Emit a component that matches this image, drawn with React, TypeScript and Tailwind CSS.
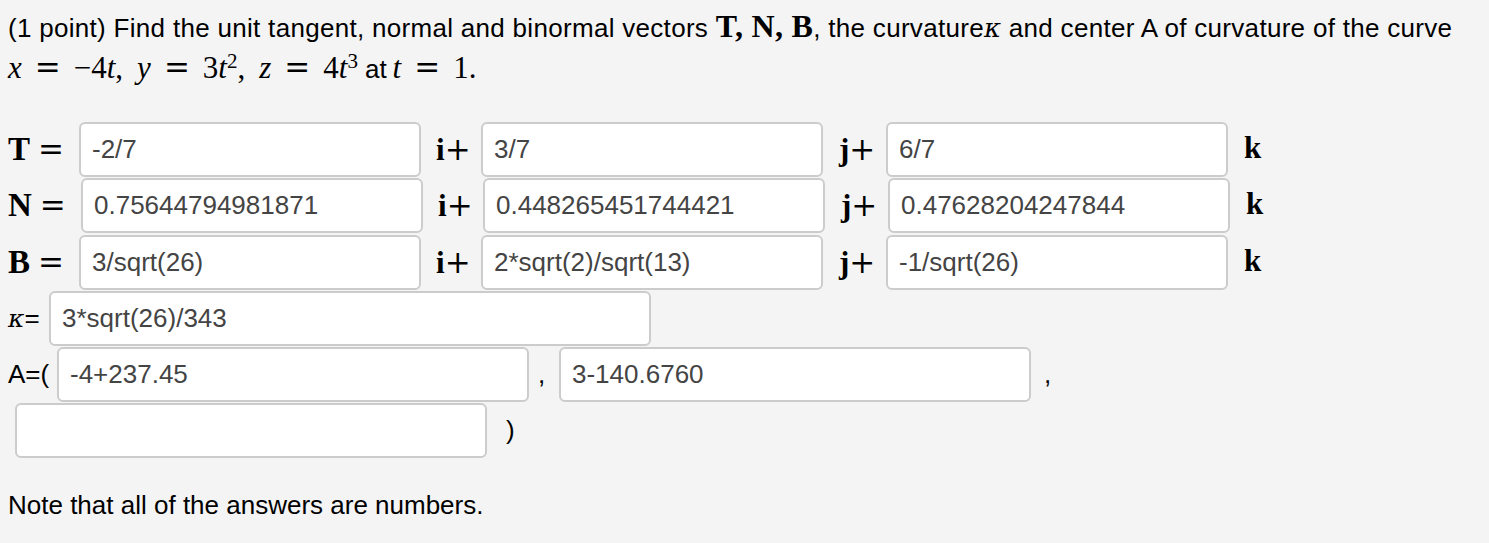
import React from 'react';

const SANS = "font-['Liberation_Sans',Arial,sans-serif]";
const SERIF = "font-['Liberation_Serif','Times_New_Roman',serif]";
const OPS = "font-['DejaVu_Serif',serif]";

function Field({ value = '', w }: { value?: string; w: string }) {
  return (
    <div className={`${w} h-[55px] shrink-0 rounded-[6px] border-2 border-[#cccccc] bg-white pl-[11px] flex items-center text-[26px] text-[#444]`}>
      {value}
    </div>
  );
}

function Op({ ch }: { ch: string }) {
  return <span className={`${OPS} text-[31px] font-normal leading-none`}>{ch}</span>;
}

function VecRow({ name, vals, labelW }: { name: string; vals: string[]; labelW: string }) {
  return (
    <div className="flex items-center h-[55px]">
      <div className={`${labelW} shrink-0 flex items-center gap-[8px]`}>
        <span className={`${SERIF} font-bold text-[33px] leading-none`}>{name}</span>
        <Op ch="=" />
      </div>
      <Field value={vals[0]} w="w-[342px]" />
      <div className="w-[60px] shrink-0 pl-[15px] flex items-center">
        <span className={`${SERIF} font-bold text-[31px] leading-none`}>i</span>
        <Op ch="+" />
      </div>
      <Field value={vals[1]} w="w-[342px]" />
      <div className="w-[63px] shrink-0 pl-[16px] flex items-center">
        <span className={`${SERIF} font-bold text-[31px] leading-none`}>j</span>
        <Op ch="+" />
      </div>
      <Field value={vals[2]} w="w-[342px]" />
      <div className="pl-[16px]">
        <span className={`${SERIF} font-bold text-[31px] leading-none`}>k</span>
      </div>
    </div>
  );
}

export default function App() {
  return (
    <div className={`${SANS} min-h-[543px] w-full bg-[#f4f4f4] text-black pl-[8px] pt-[9px] text-[26px]`}>
      {/* problem statement */}
      <div className="leading-[39px]">
        <div className="whitespace-nowrap tracking-[0.3px]">
          (1 point) Find the unit tangent, normal and binormal vectors{' '}
          <span className={`${SERIF} font-bold text-[32px] leading-none`}>T, N, B</span>, the curvature
          <span className={`${OPS} italic text-[26px] leading-none`}>κ</span> and center A of curvature of the curve
        </div>
        <div className="whitespace-nowrap flex items-baseline">
          <span className={`${SERIF} italic text-[31px]`}>x</span>
          <span className="mx-[13px]"><Op ch="=" /></span>
          <span className={`${SERIF} text-[31px]`}>−4<i>t</i>,</span>
          <span className={`${SERIF} italic text-[31px] ml-[14px]`}>y</span>
          <span className="mx-[13px]"><Op ch="=" /></span>
          <span className={`${SERIF} text-[31px]`}>3<i>t</i><sup className="text-[21px]">2</sup>,</span>
          <span className={`${SERIF} italic text-[31px] ml-[14px]`}>z</span>
          <span className="mx-[13px]"><Op ch="=" /></span>
          <span className={`${SERIF} text-[31px]`}>4<i>t</i><sup className="text-[21px]">3</sup></span>
          <span className="ml-[7px] mr-[6px]">at</span>
          <span className={`${SERIF} italic text-[31px]`}>t</span>
          <span className="mx-[13px]"><Op ch="=" /></span>
          <span className={`${SERIF} text-[31px]`}>1.</span>
        </div>
      </div>

      {/* answer blanks */}
      <div className="mt-[33px] flex flex-col gap-[1.3px]">
        <VecRow name="T" labelW="w-[71px]" vals={['-2/7', '3/7', '6/7']} />
        <VecRow name="N" labelW="w-[73px]" vals={['0.75644794981871', '0.448265451744421', '0.47628204247844']} />
        <VecRow name="B" labelW="w-[71px]" vals={['3/sqrt(26)', '2*sqrt(2)/sqrt(13)', '-1/sqrt(26)']} />

        <div className="flex items-center h-[55px]">
          <div className="w-[41px] shrink-0 flex items-center">
            <span className={`${OPS} italic text-[25px] leading-none`}>κ</span>
            <span>=</span>
          </div>
          <Field value="3*sqrt(26)/343" w="w-[602px]" />
        </div>

        <div className="flex items-center h-[55px]">
          <div className="w-[49px] shrink-0">A=(</div>
          <Field value="-4+237.45" w="w-[472px]" />
          <div className="w-[30px] shrink-0 pl-[9px]">,</div>
          <Field value="3-140.6760" w="w-[472px]" />
          <div className="pl-[13px]">,</div>
        </div>

        <div className="flex items-center h-[55px] pl-[7px]">
          <Field w="w-[472px]" />
          <div className="pl-[19px]">)</div>
        </div>
      </div>

      <div className="mt-[33px] leading-[29px]">Note that all of the answers are numbers.</div>
    </div>
  );
}
